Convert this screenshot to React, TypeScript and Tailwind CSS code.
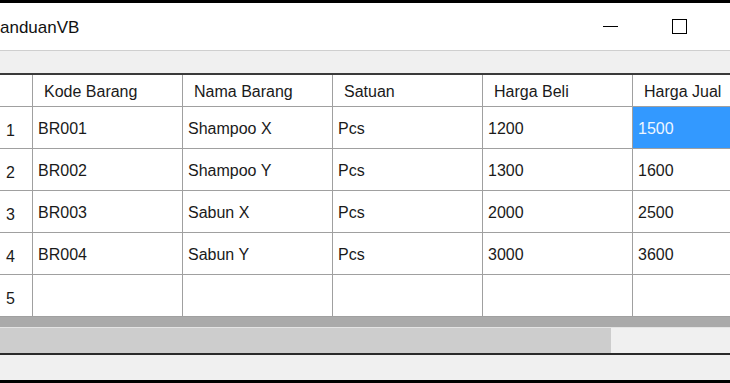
import React from 'react';

const columns = ['Kode Barang', 'Nama Barang', 'Satuan', 'Harga Beli', 'Harga Jual'];

const rows = [
  ['BR001', 'Shampoo X', 'Pcs', '1200', '1500'],
  ['BR002', 'Shampoo Y', 'Pcs', '1300', '1600'],
  ['BR003', 'Sabun X', 'Pcs', '2000', '2500'],
  ['BR004', 'Sabun Y', 'Pcs', '3000', '3600'],
  ['', '', '', '', ''],
];

export default function App() {
  return (
    <div
      className="w-[730px] h-[383px] overflow-hidden bg-black flex flex-col text-[#1a1a1a]"
      style={{ fontFamily: '"Liberation Sans", Arial, sans-serif' }}
    >
      {/* Title bar */}
      <div className="mt-[3px] h-[47px] bg-white flex items-center shrink-0">
        <span className="text-[17px] text-[#111] mt-[2px]">anduanVB</span>
        <div className="ml-auto flex items-center">
          <div className="w-[15px] h-px bg-black mr-[54px] -mt-[1px]" />
          <div className="w-[15px] h-[15px] border border-black mr-[43px] -mt-[1px]" />
        </div>
      </div>

      {/* Toolbar band */}
      <div className="h-px bg-[#cfcfcf] shrink-0" />
      <div className="h-[22px] bg-[#f0f0f0] shrink-0" />
      <div className="h-[2px] bg-[#3a3a3a] shrink-0" />

      {/* Grid */}
      <div className="bg-white shrink-0 overflow-hidden">
        <div className="flex h-[32px] border-b border-[#a0a0a0]">
          <div className="w-[33px] shrink-0 border-r border-[#a0a0a0]" />
          {columns.map((c) => (
            <div
              key={c}
              className="w-[150px] shrink-0 border-r border-[#a0a0a0] pl-[11px] pt-[3px] flex items-center text-[16px]"
            >
              {c}
            </div>
          ))}
        </div>
        {rows.map((r, i) => (
          <div key={i} className="flex h-[42px] border-b border-[#a0a0a0]">
            <div className="w-[33px] shrink-0 border-r border-[#a0a0a0] pl-[6px] pt-[7px] flex items-center text-[16px]">
              {i + 1}
            </div>
            {r.map((v, j) => {
              const selected = i === 0 && j === 4;
              return (
                <div
                  key={j}
                  className={
                    selected
                      ? 'w-[150px] shrink-0 border-r border-[#a0a0a0] pl-[5px] pt-[2px] flex items-center text-[16px] bg-[#3399ff] text-[#eef6ff]'
                      : 'w-[150px] shrink-0 border-r border-[#a0a0a0] pl-[5px] pt-[2px] flex items-center text-[16px]'
                  }
                >
                  {v}
                </div>
              );
            })}
          </div>
        ))}
      </div>

      {/* Gray band + scrollbar */}
      <div className="h-[10px] bg-[#aaaaaa] shrink-0" />
      <div className="h-px bg-[#e4e4e4] shrink-0" />
      <div className="h-[25px] bg-[#f0f0f0] flex shrink-0">
        <div className="w-[611px] h-full bg-[#cdcdcd]" />
      </div>
      <div className="h-[2px] bg-[#2a2a2a] shrink-0" />
      <div className="h-[25px] bg-[#f0f0f0] shrink-0" />
    </div>
  );
}
